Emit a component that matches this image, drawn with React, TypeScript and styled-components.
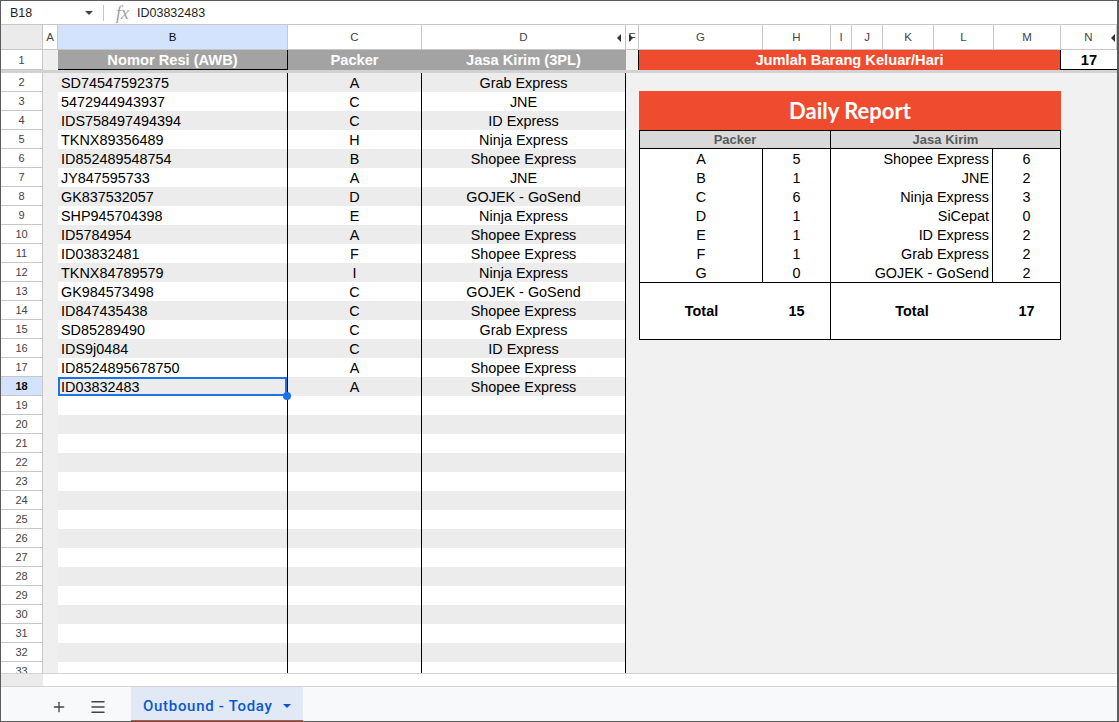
import styled, { createGlobalStyle } from "styled-components";
import { Plus, Menu } from "lucide-react";

const ORANGE = "#ef4c2f";
const GRID = "#c7c7c7";

const rows: [string, string, string][] = [
  ["SD74547592375", "A", "Grab Express"],
  ["5472944943937", "C", "JNE"],
  ["IDS758497494394", "C", "ID Express"],
  ["TKNX89356489", "H", "Ninja Express"],
  ["ID852489548754", "B", "Shopee Express"],
  ["JY847595733", "A", "JNE"],
  ["GK837532057", "D", "GOJEK - GoSend"],
  ["SHP945704398", "E", "Ninja Express"],
  ["ID5784954", "A", "Shopee Express"],
  ["ID03832481", "F", "Shopee Express"],
  ["TKNX84789579", "I", "Ninja Express"],
  ["GK984573498", "C", "GOJEK - GoSend"],
  ["ID847435438", "C", "Shopee Express"],
  ["SD85289490", "C", "Grab Express"],
  ["IDS9j0484", "C", "ID Express"],
  ["ID8524895678750", "A", "Shopee Express"],
  ["ID03832483", "A", "Shopee Express"],
];

const packers: [string, number][] = [
  ["A", 5],
  ["B", 1],
  ["C", 6],
  ["D", 1],
  ["E", 1],
  ["F", 1],
  ["G", 0],
];

const kurir: [string, number][] = [
  ["Shopee Express", 6],
  ["JNE", 2],
  ["Ninja Express", 3],
  ["SiCepat", 0],
  ["ID Express", 2],
  ["Grab Express", 2],
  ["GOJEK - GoSend", 2],
];

const letters = ["A", "B", "C", "D", "F", "G", "H", "I", "J", "K", "L", "M", "N"];

export default function App() {
  const allRows = Array.from({ length: 32 }, (_, i) => {
    const n = i + 2;
    const r = rows[i] || ["", "", ""];
    return { n, r };
  });

  return (
    <>
      <GlobalStyle />
      <Frame>
        <FormulaBar>
          <NameBox>
            <span>B18</span>
            <Caret />
          </NameBox>
          <Divider />
          <Fx>fx</Fx>
          <FormulaText>ID03832483</FormulaText>
        </FormulaBar>

        <ColHeader>
          <Corner />
          {letters.map((l) => (
            <ColCell key={l} $active={l === "B"}>
              {l}
              {l === "D" && <ArrowLeft $right={4} />}
              {l === "F" && <ArrowRight />}
              {l === "N" && <ArrowLeft $right={1} />}
            </ColCell>
          ))}
        </ColHeader>

        <FrozenRow>
          <RowNum>1</RowNum>
          <AFill />
          <HeadCell $strong>Nomor Resi (AWB)</HeadCell>
          <HeadCell>Packer</HeadCell>
          <HeadCell>Jasa Kirim (3PL)</HeadCell>
          <FFill />
          <Banner>Jumlah Barang Keluar/Hari</Banner>
          <CountCell>17</CountCell>
        </FrozenRow>
        <FreezeBand />

        <Body>
          <LeftRows>
            {allRows.map(({ n, r }) => (
              <DataRow key={n}>
                <RowNum $active={n === 18}>{n}</RowNum>
                <AFill />
                <Cell $band={n % 2 === 0} $selected={n === 18}>
                  {r[0]}
                  {n === 18 && <Handle />}
                </Cell>
                <Cell $band={n % 2 === 0} $align="center">
                  {r[1]}
                </Cell>
                <Cell $band={n % 2 === 0} $align="center">
                  {r[2]}
                </Cell>
              </DataRow>
            ))}
          </LeftRows>

          <RightPane>
            <Report>
              <ReportTitle>Daily Report</ReportTitle>
              <ReportTable>
                <RHead $divider>Packer</RHead>
                <RHead>Jasa Kirim</RHead>
                {packers.map(([p, c], i) => (
                  <ReportLine key={p}>
                    <RCell $border>{p}</RCell>
                    <RCell $border>{c}</RCell>
                    <RCell $border $align="right">
                      {kurir[i][0]}
                    </RCell>
                    <RCell>{kurir[i][1]}</RCell>
                  </ReportLine>
                ))}
                <TotalCell>Total</TotalCell>
                <TotalCell $border>15</TotalCell>
                <TotalCell>Total</TotalCell>
                <TotalCell>17</TotalCell>
              </ReportTable>
            </Report>
          </RightPane>
        </Body>

        <ScrollStrip>
          <ScrollCorner />
        </ScrollStrip>

        <TabBar>
          <Tools>
            <IconBox>
              <Plus size={16} strokeWidth={2} />
            </IconBox>
            <IconBox>
              <Menu size={18} strokeWidth={2} />
            </IconBox>
          </Tools>
          <SheetTab>
            Outbound - Today
            <TabCaret />
          </SheetTab>
        </TabBar>
      </Frame>
    </>
  );
}

const GlobalStyle = createGlobalStyle`
  * { box-sizing: border-box; }
  body {
    margin: 0;
    background: #fff;
    font-family: "Liberation Sans", Arial, sans-serif;
  }
`;

const Frame = styled.div`
  width: 1119px;
  height: 722px;
  display: flex;
  flex-direction: column;
  border: 1px solid #5c5c5c;
  border-right-width: 2px;
  overflow: hidden;
  background: #fff;
`;

const FormulaBar = styled.div`
  height: 24px;
  flex-shrink: 0;
  display: flex;
  align-items: center;
  border-bottom: 1px solid ${GRID};
  font-size: 12.5px;
  color: #1f1f1f;
`;

const NameBox = styled.div`
  width: 102px;
  display: flex;
  align-items: center;
  justify-content: space-between;
  padding: 0 10px 0 9px;
`;

const Caret = styled.span`
  width: 0;
  height: 0;
  border-left: 4px solid transparent;
  border-right: 4px solid transparent;
  border-top: 4px solid #444;
`;

const Divider = styled.span`
  width: 1px;
  height: 16px;
  background: ${GRID};
`;

const Fx = styled.span`
  margin-left: 12px;
  font-family: "Liberation Serif", serif;
  font-style: italic;
  font-size: 18px;
  line-height: 1;
  color: #a0a0a0;
`;

const FormulaText = styled.span`
  margin-left: 8px;
`;

const COLS = "42px 15px 230px 134px 204px 13px 124px 68px 21px 31px 51px 60px 67px 1fr";

const ColHeader = styled.div`
  height: 25px;
  flex-shrink: 0;
  display: grid;
  grid-template-columns: ${COLS};
  border-bottom: 1px solid ${GRID};
`;

const Corner = styled.div`
  background: #ebebeb;
  border-right: 1px solid ${GRID};
`;

const ColCell = styled.div<{ $active?: boolean }>`
  position: relative;
  display: flex;
  align-items: center;
  justify-content: center;
  font-size: 11.5px;
  color: ${(p) => (p.$active ? "#0a0a0a" : "#444")};
  background: ${(p) => (p.$active ? "#d3e3fd" : "#fff")};
  border-right: 1px solid ${GRID};
`;

const ArrowLeft = styled.span<{ $right: number }>`
  position: absolute;
  right: ${(p) => p.$right}px;
  top: 9px;
  width: 0;
  height: 0;
  border-top: 4px solid transparent;
  border-bottom: 4px solid transparent;
  border-right: 4px solid #333;
`;

const ArrowRight = styled.span`
  position: absolute;
  left: 3px;
  top: 9px;
  width: 0;
  height: 0;
  border-top: 4px solid transparent;
  border-bottom: 4px solid transparent;
  border-left: 4px solid #333;
`;

const FrozenRow = styled.div`
  height: 20px;
  flex-shrink: 0;
  display: grid;
  grid-template-columns: ${COLS};
`;

const RowNum = styled.div<{ $active?: boolean }>`
  display: flex;
  align-items: center;
  justify-content: center;
  font-size: 11px;
  font-weight: ${(p) => (p.$active ? 700 : 400)};
  color: ${(p) => (p.$active ? "#0a0a0a" : "#444")};
  background: ${(p) => (p.$active ? "#d3e3fd" : "#fff")};
  border-right: 1px solid ${GRID};
  border-bottom: 1px solid ${GRID};
`;

const AFill = styled.div`
  background: #efefef;
`;

const HeadCell = styled.div<{ $strong?: boolean }>`
  display: flex;
  align-items: center;
  justify-content: center;
  background: #a3a3a3;
  color: #fff;
  font-weight: 700;
  font-size: 14.67px;
  border-right: 1px solid ${(p) => (p.$strong ? "#000" : "#a3a3a3")};
  border-bottom: 1px solid ${(p) => (p.$strong ? "#000" : "#a3a3a3")};
`;

const FFill = styled.div`
  background: #f1f1f1;
  border-right: 1px solid #000;
`;

const Banner = styled.div`
  grid-column: span 7;
  display: flex;
  align-items: center;
  justify-content: center;
  background: ${ORANGE};
  color: #fff;
  font-weight: 700;
  font-size: 14.67px;
  border-right: 1px solid #000;
`;

const CountCell = styled.div`
  display: flex;
  align-items: center;
  justify-content: center;
  font-weight: 700;
  font-size: 14.67px;
  border-bottom: 1px solid #000;
`;

const FreezeBand = styled.div`
  height: 3px;
  flex-shrink: 0;
  background: #d2d2d2;
`;

const Body = styled.div`
  height: 600px;
  flex-shrink: 0;
  display: flex;
  overflow: hidden;
`;

const LeftRows = styled.div`
  width: 625px;
  flex-shrink: 0;
  display: flex;
  flex-direction: column;
`;

const DataRow = styled.div`
  height: 19px;
  flex-shrink: 0;
  display: grid;
  grid-template-columns: 42px 15px 230px 134px 204px;
`;

const Cell = styled.div<{ $band?: boolean; $align?: string; $selected?: boolean }>`
  position: relative;
  display: flex;
  align-items: center;
  justify-content: ${(p) => (p.$align === "center" ? "center" : "flex-start")};
  padding: 0 3px;
  font-size: 14.4px;
  color: #000;
  white-space: nowrap;
  background: ${(p) => (p.$band ? "#ececec" : "#fff")};
  border-right: 1px solid #000;
  box-shadow: ${(p) => (p.$selected ? "inset 0 0 0 2px #1a73e8" : "none")};
`;

const Handle = styled.span`
  position: absolute;
  right: -4px;
  bottom: -4px;
  width: 8px;
  height: 8px;
  border-radius: 50%;
  background: #1a73e8;
  z-index: 2;
`;

const RightPane = styled.div`
  flex: 1;
  background: #f1f1f1;
  padding: 18px 0 0 13px;
`;

const Report = styled.div`
  width: 422px;
  display: flex;
  flex-direction: column;
`;

const ReportTitle = styled.div`
  height: 39px;
  display: flex;
  align-items: center;
  justify-content: center;
  background: ${ORANGE};
  color: #fff;
  font-family: Lato, "Open Sans", sans-serif;
  font-weight: 700;
  font-size: 22px;
`;

const ReportTable = styled.div`
  display: grid;
  grid-template-columns: 123px 68px 162px 1fr;
  border: 1px solid #000;
  background: #fff;
`;

const RHead = styled.div<{ $divider?: boolean }>`
  grid-column: span 2;
  height: 18px;
  display: flex;
  align-items: center;
  justify-content: center;
  background: #d9d9d9;
  color: #5a5a5a;
  font-weight: 700;
  font-size: 13px;
  border-bottom: 1px solid #000;
  border-right: ${(p) => (p.$divider ? "1px solid #000" : "none")};
`;

const ReportLine = styled.div`
  display: contents;
`;

const RCell = styled.div<{ $border?: boolean; $align?: string }>`
  height: 19px;
  display: flex;
  align-items: center;
  justify-content: ${(p) => (p.$align === "right" ? "flex-end" : "center")};
  padding: 0 3px;
  font-size: 14.4px;
  color: #000;
  white-space: nowrap;
  border-right: ${(p) => (p.$border ? "1px solid #000" : "none")};
`;

const TotalCell = styled.div<{ $border?: boolean }>`
  height: 57px;
  display: flex;
  align-items: center;
  justify-content: center;
  font-size: 14.4px;
  font-weight: 700;
  border-top: 1px solid #000;
  border-right: ${(p) => (p.$border ? "1px solid #000" : "none")};
`;

const ScrollStrip = styled.div`
  height: 14px;
  flex-shrink: 0;
  display: flex;
  border-top: 1px solid #d4d4d4;
  border-bottom: 1px solid #d4d4d4;
`;

const ScrollCorner = styled.div`
  width: 42px;
  background: #ebebeb;
`;

const TabBar = styled.div`
  flex: 1;
  display: flex;
  align-items: stretch;
  background: #f8f9fa;
`;

const Tools = styled.div`
  display: flex;
  align-items: center;
  gap: 21px;
  margin-left: 49px;
  margin-right: 24px;
  padding-top: 5px;
  color: #444;
`;

const IconBox = styled.div`
  width: 18px;
  display: flex;
  align-items: center;
  justify-content: center;
`;

const SheetTab = styled.div`
  width: 172px;
  display: flex;
  align-items: center;
  padding: 5px 12px 0;
  background: #e1e9f7;
  color: #0b57d0;
  font-family: Roboto, "Liberation Sans", sans-serif;
  font-weight: 500;
  font-size: 15px;
  letter-spacing: 0.7px;
  border-bottom: 1px solid #c94a3a;
`;

const TabCaret = styled.span`
  margin-left: auto;
  width: 0;
  height: 0;
  border-left: 4px solid transparent;
  border-right: 4px solid transparent;
  border-top: 4px solid #0b57d0;
`;
